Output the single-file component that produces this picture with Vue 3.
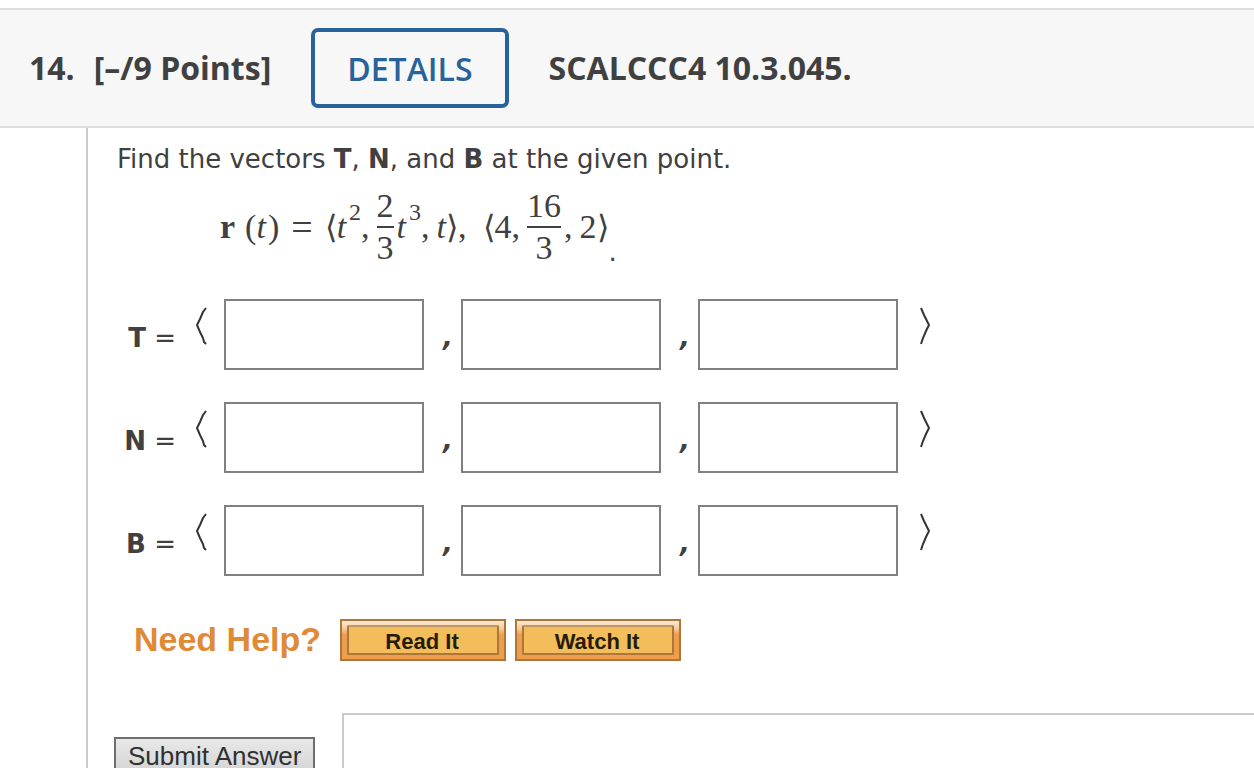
<script setup>
import { reactive } from 'vue'

const rows = reactive([
  { name: 'T', values: ['', '', ''] },
  { name: 'N', values: ['', '', ''] },
  { name: 'B', values: ['', '', ''] },
])
</script>

<template>
  <main class="page">
    <header class="head">
      <h2 class="points"><span class="number">14.</span><span>[–/9 Points]</span></h2>
      <button type="button" class="details">DETAILS</button>
      <h2 class="code">SCALCCC4 10.3.045.</h2>
    </header>

    <section class="question">
      <p class="prompt">Find the vectors <b>T</b>, <b>N</b>, and <b>B</b> at the given point.</p>

      <div class="formula">
        <b class="fn">r</b>
        <span>(</span><i class="arg">t</i><span>)</span>
        <span class="eq">=</span>
        <span class="angle">⟨</span><i>t</i><sup>2</sup><span class="comma">,</span>
        <span class="frac"><span>2</span><span class="den">3</span></span>
        <i>t</i><sup>3</sup><span class="comma">,</span>
        <i>t</i><span class="angle">⟩</span><span class="comma wide">,</span>
        <span class="angle">⟨</span><span>4</span><span class="comma">,</span>
        <span class="frac"><span>16</span><span class="den">3</span></span>
        <span class="comma">,</span><span>2</span><span class="angle">⟩</span>
        <span class="stop">.</span>
      </div>

      <form class="answers" @submit.prevent>
        <div v-for="row in rows" :key="row.name" class="row">
          <label class="label" :for="row.name + '-0'"><b>{{ row.name }}</b> =</label>
          <svg class="bracket left" viewBox="0 0 12 38" aria-hidden="true">
            <path d="M11 1 L8 5 L5 12 L2 18 L5 25 L8 31 L9 35 L11 37" />
          </svg>
          <template v-for="(v, i) in row.values" :key="i">
            <span v-if="i" class="sep">,</span>
            <input
              :id="row.name + '-' + i"
              v-model="row.values[i]"
              class="box"
              type="text"
              :aria-label="row.name + ' component ' + (i + 1)"
            />
          </template>
          <svg class="bracket right" viewBox="0 0 12 38" aria-hidden="true">
            <path d="M2 1 L5 8 L10 18 L7 24 L4 31 L2 37" />
          </svg>
        </div>
      </form>

      <div class="help">
        <strong class="need">Need Help?</strong>
        <button type="button" class="gold"><span>Read It</span></button>
        <button type="button" class="gold"><span>Watch It</span></button>
      </div>

      <footer class="foot">
        <button type="button" class="submit">Submit Answer</button>
        <div class="panel"></div>
      </footer>
    </section>
  </main>
</template>

<style>
body {
  margin: 0;
  background: #fff;
}
</style>

<style scoped>
.page {
  box-sizing: border-box;
  height: 100vh;
  padding-top: 8px;
  display: flex;
  flex-direction: column;
  overflow: hidden;
  color: #404040;
  font-family: "DejaVu Sans", Verdana, sans-serif;
  font-size: 26px;
}
.head {
  display: flex;
  align-items: center;
  flex: none;
  gap: 40px;
  padding: 18px 29px;
  background: #f7f7f7;
  border-top: 2px solid #ddd;
  border-bottom: 2px solid #ddd;
  font-family: "Open Sans", "Noto Sans", sans-serif;
}
.points,
.code {
  margin: 0;
  font-size: 32px;
  line-height: 44px;
  white-space: nowrap;
}
.points {
  display: flex;
  gap: 19px;
}
.details {
  height: 80px;
  padding: 0 32px;
  border: 4px solid #28629a;
  border-radius: 7px;
  background: transparent;
  color: #28629a;
  font: 600 32px "Open Sans", "Noto Sans", sans-serif;
}
.question {
  flex: 1;
  display: flex;
  flex-direction: column;
  margin-left: 86px;
  padding-left: 26px;
  border-left: 2px solid #ccc;
}
.prompt {
  margin: 15px 0 0 3px;
  line-height: 32px;
  white-space: nowrap;
}
.formula {
  display: flex;
  align-items: center;
  height: 84px;
  margin: 10px 0 0 106px;
  font-family: "Liberation Serif", serif;
  font-size: 34px;
  line-height: 38px;
}
.fn {
  margin-right: 10px;
}
.arg {
  margin: 0 2px 0 0;
}
.eq {
  margin: 0 12px;
  font-size: 38px;
}
.angle {
  font-family: "DejaVu Sans", sans-serif;
  font-size: 32px;
  font-weight: 200;
}
.formula sup {
  align-self: flex-start;
  margin: 8px 0 0 3px;
  font-size: 24px;
}
.comma {
  margin-right: 7px;
}
.wide {
  margin-right: 16px;
}
.frac {
  display: flex;
  flex-direction: column;
  margin-right: 3px;
  text-align: center;
  line-height: 40px;
}
.den {
  border-top: 2px solid #404040;
}
.stop {
  align-self: flex-end;
  font-family: "DejaVu Sans", sans-serif;
  font-size: 26px;
  line-height: 34px;
}
.answers {
  display: flex;
  flex-direction: column;
  gap: 32px;
  margin-top: 30px;
}
.row {
  display: flex;
  align-items: center;
}
.label {
  width: 62px;
  padding-top: 6px;
  text-align: right;
  white-space: nowrap;
}
.bracket {
  width: 12px;
  height: 38px;
  fill: none;
  stroke: #333;
  stroke-width: 2;
}
.left {
  margin: 0 17px 17px 19px;
}
.right {
  margin: 0 0 17px 21px;
}
.box {
  box-sizing: border-box;
  width: 200px;
  height: 71px;
  padding: 8px;
  border: 2px solid #808080;
  background: #fff;
  font: inherit;
}
.sep {
  box-sizing: border-box;
  width: 37px;
  padding: 4px 0 0 19px;
  font-style: oblique;
  font-weight: bold;
}
.help {
  display: flex;
  align-items: center;
  margin: 43px 0 0 20px;
  gap: 9px;
}
.need {
  margin-right: 10px;
  padding-bottom: 2px;
  color: #e08a35;
  font: bold 34px "Liberation Sans", Arial, sans-serif;
}
.gold {
  box-sizing: border-box;
  width: 166px;
  height: 42px;
  padding: 4px 5px;
  border: 2px solid #ae7639;
  background: linear-gradient(#fdebd6 0, #f6c795 8px, #ec9e4c 14px, #ec9e4c 100%);
  color: #261c08;
  font: bold 22px "Liberation Sans", Arial, sans-serif;
}
.gold span {
  display: block;
  padding: 4px 2px 0 0;
  border: 2px solid #ae7639;
  border-top-color: #bc986f;
  border-radius: 2px;
  background: #f2bd5a;
  line-height: 22px;
}
.foot {
  flex: 1;
  display: flex;
  align-items: flex-start;
  margin-top: 52px;
}
.submit {
  box-sizing: border-box;
  flex: none;
  height: 38px;
  margin: 24px 27px 0 0;
  padding: 0 12px;
  border: 2px solid #6e6e6e;
  background: linear-gradient(#e8e8e8, #d4d4d4);
  color: #303030;
  font: 26px "Liberation Sans", Arial, sans-serif;
}
.panel {
  flex: 1;
  align-self: stretch;
  border-top: 2px solid #ccc;
  border-left: 2px solid #ccc;
}
</style>
